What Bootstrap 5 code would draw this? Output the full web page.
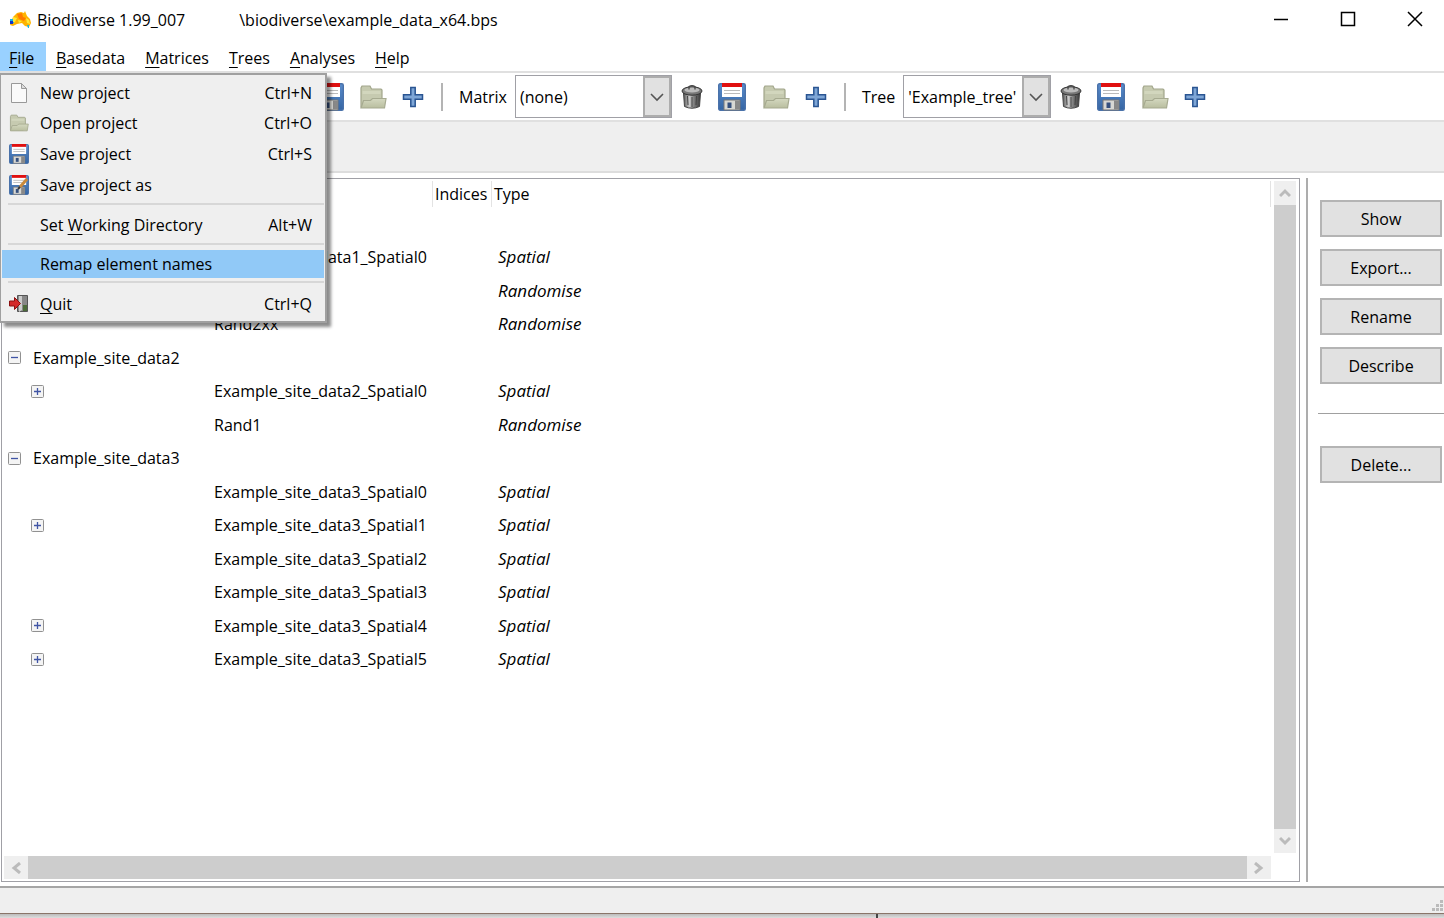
<!DOCTYPE html>
<html lang="en">
<head>
<meta charset="utf-8">
<meta name="viewport" content="width=device-width, initial-scale=1">
<title>Biodiverse 1.99_007</title>
<link href="https://cdn.jsdelivr.net/npm/bootstrap@5.3.0/dist/css/bootstrap.min.css" rel="stylesheet">
<style>
body{font-family:"Open Sans","Noto Sans",sans-serif;font-size:16px;line-height:24px;color:#000;background:#fff;white-space:nowrap;overflow:hidden}
svg{display:block;flex:none}
u{text-underline-offset:3px}
.app-title{height:42px;padding-left:9px;gap:9px}
.app-title .win-btn{width:58px;height:38px;border:0;background:none;padding:0}
.file-path{margin-left:54px}
.app-menu{height:29px}
.app-menu a{padding:4px 10px 1px;color:#000;text-decoration:none}
.app-menu a.open{background:#99d1ff;padding-left:9px;width:46px}
.app-tools{height:51px;border-top:2px solid #e0e0e0;border-bottom:2px solid #e0e0e0;padding-left:320px}
.tool-btn{border:0;background:none;padding:0;width:40px;height:44px;display:flex;align-items:center;justify-content:center}
.tool-btn.cut{width:33px;justify-content:flex-start}
.tool-rule{width:2px;height:28px;background:#b4b4b4;margin:0 16px 0 8px}
.combo{height:43px;appearance:none;border:1px solid #a0a0a6;border-radius:0;color:#000;padding:0 30px 0 4px;
 background:#fff url("data:image/svg+xml,%3Csvg xmlns='http://www.w3.org/2000/svg' width='28' height='41'%3E%3Cpath fill='%23e1e1e1' stroke='%23adadad' stroke-width='2' d='M1 1h26v39H1z'/%3E%3Cpath d='M8 18l6 6 6-6' fill='none' stroke='%23555' stroke-width='1.6'/%3E%3C/svg%3E") right center no-repeat}
.combo-matrix{width:157px}
.combo-tree{width:148px}
.tab-strip{height:51px;background:#efefef;border-bottom:2px solid #ddd}
.tree-frame{border:1px solid #a0a0a6;margin:5px 0 4px 1px;padding:2px 3px 2px 2px;display:grid;grid-template:1fr 23px / 1fr 22px;gap:3px;min-width:0}
.tree-table{table-layout:fixed;width:100%;border-collapse:separate;border-spacing:0}
.tree-table th{height:26px;padding:0 0 0 2px;font-weight:400;border-right:1px solid #e3e3e3;line-height:26px}
.tree-table td{height:33px;padding:0}
.tree-table tbody tr:nth-child(even) td{height:34px}
.tree-table td.kind{font-style:italic;font-size:17px;padding-left:6px}
.tree-table td:first-child{padding-left:4px}
.tree-table td.child{padding-left:27px}
.expander{width:13px;height:13px;padding:0;border:0;background:none;display:block}
.scroll-part{background:#efefef;display:flex;align-items:center;justify-content:center;border:0;padding:0}
.scroll-part.v{height:24px}
.scroll-part.h{width:24px}
.scroll-thumb{background:#cdcdcd;flex:1}
.side{flex:none;border-left:2px solid #adadad;margin:5px 0 4px 6px;padding:22px 2px 0 12px;width:138px}
.side-list{row-gap:12px}
.side-btn{height:37px;border:2px solid #b4b4b4;border-radius:0;background:#e1e1e1;color:#000;padding:0;width:100%}
.side-rule{height:1px;background:#a0a0a0;margin:17px -2px 20px -2px}
.app-status{height:27px;border-top:2px solid #a5a5a5;background:#efefef}
.desk-edge{height:5px;border-top:1px solid #8a7569;background:linear-gradient(#bbb,#ddd)}
.desk-tick{width:2px;height:4px;background:#444;margin-left:876px}
.file-menu{position:absolute;left:0;top:73px;width:327px;background:#efefef;border:2px solid #a0a0a0;border-left-width:1px;padding:3px 1px 2px 1px;box-shadow:4px 4px 3px rgba(0,0,0,.45);z-index:5}
.file-item{display:flex;width:100%;align-items:center;border:0;background:none;text-align:left;height:30px;padding:0 12px 0 7px;color:#000}
.file-item.tall{height:31px}
.file-item .ico{width:31px}
.file-item.hot{height:28px;background:#91c9f7}
.file-rule{height:2px;background:#d7d7d7;margin:3px 0 5px 6px}
</style>
</head>
<body>
<svg width="0" height="0" class="position-absolute" aria-hidden="true">
<defs>
<linearGradient id="gb" x2="0" y2="1"><stop stop-color="#5a8ccb"/><stop offset="1" stop-color="#3465a4"/></linearGradient>
<linearGradient id="gc"><stop stop-color="#555"/><stop offset=".35" stop-color="#ccc"/><stop offset=".6" stop-color="#808080"/><stop offset="1" stop-color="#3a3a3a"/></linearGradient>
<linearGradient id="gf" x2="0" y2="1"><stop stop-color="#d4d8c0"/><stop offset="1" stop-color="#b9be9f"/></linearGradient>
<symbol id="i-save" viewBox="0 0 28 28"><rect x=".7" y=".7" width="26.6" height="26.6" rx="1.5" fill="url(#gb)" stroke="#4a72aa" stroke-width="1.4"/><path fill="#fff" d="M4 1h20v13H4z"/><path fill="#e01010" d="M4 0h20v4H4z"/><path d="M6 7.500h16M6 10.500h16" stroke="#bbb" stroke-width="1.200"/><path fill="#d8d8d4" stroke="#777" d="M6 17h16v10H6z"/><path fill="#888" d="M17 17.500h5v9h-5z"/><path fill="#35507e" d="M9.500 19.500h4v5.500h-4z"/></symbol>
<symbol id="i-folder" viewBox="0 0 28 24"><path fill="#c6cab0" stroke="#a2a68b" stroke-width="1.200" d="M2 22V3l1-2h8l1.500 3H22l1 1v9l-3 8z"/><path fill="#d2d6bd" d="M3.500 6h18v3h-18z"/><path fill="url(#gf)" stroke="#a6aa90" stroke-width="1.200" d="M4.500 15.500h7l2-2H27L25.500 23H2z"/></symbol>
<symbol id="i-plus" viewBox="0 0 22 22"><path fill="#7ea6d6" stroke="#2a5592" stroke-width="1.500" d="M8.800 1.500h4.400v7.300h7.300v4.400h-7.300v7.300H8.800v-7.300H1.500V8.800h7.300z"/></symbol>
<symbol id="i-trash" viewBox="0 0 22 24"><path fill="url(#gc)" stroke="#444" d="M2.500 8h17L18.500 21.500Q11 25 3.500 21.500z"/><path d="M6.500 11l.500 9M11 12v10M15.500 11l-.500 9" stroke="#444"/><ellipse cx="11" cy="6" rx="10" ry="4.200" fill="#777" stroke="#333"/><ellipse cx="11" cy="5" rx="7.500" ry="2.600" fill="#bbb"/><path d="M8 4.500V1.500q3-1.500 6 0v3" fill="none" stroke="#444" stroke-width="1.300"/></symbol>
<symbol id="i-minus-box" viewBox="0 0 13 13"><rect x=".5" y=".5" width="12" height="12" rx="1" fill="#f4f4f4" stroke="#919191"/><path d="M3 6.500h7" stroke="#4055a5" stroke-width="1.300"/></symbol>
<symbol id="i-plus-box" viewBox="0 0 13 13"><rect x=".5" y=".5" width="12" height="12" rx="1" fill="#f4f4f4" stroke="#919191"/><path d="M3 6.500h7M6.500 3v7" stroke="#4055a5" stroke-width="1.300"/></symbol>
</defs>
</svg>

<div class="d-flex flex-column vh-100 position-relative">
<header class="app-title d-flex align-items-start">
 <div class="d-flex align-items-center flex-grow-1 pt-2">
  <svg width="24" height="20" viewBox="0 0 24 20"><path fill="#ffb400" d="M4 7l4-4 4-1 3 1 1-2 2 5 3 3 1 4-2 4-4-1-3-3-5 1-4 2-3-1z"/><path fill="#ff7a00" d="M8 4l5-1 1 4 3 1-2 3-5-2z"/><path fill="#ffe93b" d="M4 7l4 1-2 4-2 1zM17 8l3 2 1 4-3-1zM9 10l4 1-3 2z"/><path fill="#19b4e8" d="M1 9h3v2H1zM3 12h2v1H3zM18 15h2v3h-1z"/><path fill="#1633c8" d="M1 11h3v3H1z"/></svg>
  <span class="ms-1">Biodiverse 1.99_007</span><span class="file-path">\biodiverse\example_data_x64.bps</span>
 </div>
 <button class="win-btn" aria-label="Minimize"><svg class="mx-auto" width="16" height="16"><path d="M1 8.500h14" stroke="#000" stroke-width="1.500"/></svg></button>
 <button class="win-btn" aria-label="Maximize"><svg class="mx-auto" width="16" height="16"><path d="M1.500 1.500h13v13h-13z" fill="none" stroke="#000" stroke-width="1.500"/></svg></button>
 <button class="win-btn" aria-label="Close"><svg class="mx-auto" width="16" height="16"><path d="M1 1l14 14M15 1L1 15" stroke="#000" stroke-width="1.500"/></svg></button>
</header>

<nav class="app-menu d-flex">
 <a href="#" class="open"><u>F</u>ile</a><a href="#"><u>B</u>asedata</a><a href="#"><u>M</u>atrices</a><a href="#"><u>T</u>rees</a><a href="#"><u>A</u>nalyses</a><a href="#"><u>H</u>elp</a>
</nav>

<div class="app-tools d-flex align-items-center">
 <button class="tool-btn cut" aria-label="Save basedata"><svg width="24" height="28"><use href="#i-save" width="28" x="-4" height="28"/></svg></button>
 <button class="tool-btn" aria-label="Open basedata"><svg width="28" height="24"><use href="#i-folder"/></svg></button>
 <button class="tool-btn" aria-label="Add basedata"><svg width="22" height="22"><use href="#i-plus"/></svg></button>
 <div class="tool-rule"></div>
 <label for="matrix" class="me-2">Matrix</label>
 <select id="matrix" class="combo combo-matrix"><option>(none)</option></select>
 <button class="tool-btn" aria-label="Delete matrix"><svg width="22" height="24"><use href="#i-trash"/></svg></button>
 <button class="tool-btn" aria-label="Save matrix"><svg width="28" height="28"><use href="#i-save"/></svg></button>
 <button class="tool-btn ms-1" aria-label="Open matrix"><svg width="28" height="24"><use href="#i-folder"/></svg></button>
 <button class="tool-btn" aria-label="Add matrix"><svg width="22" height="22"><use href="#i-plus"/></svg></button>
 <div class="tool-rule"></div>
 <label for="tree" class="me-2">Tree</label>
 <select id="tree" class="combo combo-tree"><option>'Example_tree'</option></select>
 <button class="tool-btn" aria-label="Delete tree"><svg width="22" height="24"><use href="#i-trash"/></svg></button>
 <button class="tool-btn" aria-label="Save tree"><svg width="28" height="28"><use href="#i-save"/></svg></button>
 <button class="tool-btn ms-1" aria-label="Open tree"><svg width="28" height="24"><use href="#i-folder"/></svg></button>
 <button class="tool-btn" aria-label="Add tree"><svg width="22" height="22"><use href="#i-plus"/></svg></button>
</div>
<div class="tab-strip"></div>

<main class="d-flex flex-grow-1">
 <section class="tree-frame flex-grow-1">
  <div>
   <table class="tree-table">
    <colgroup><col style="width:210px"><col style="width:219px"><col style="width:59px"><col></colgroup>
    <thead><tr><th class="border-0"></th><th></th><th>Indices</th><th>Type</th></tr></thead>
    <tbody>
     <tr><td colspan="4"></td></tr>
     <tr><td></td><td>Example_site_data1_Spatial0</td><td></td><td class="kind">Spatial</td></tr>
     <tr><td></td><td></td><td></td><td class="kind">Randomise</td></tr>
     <tr><td></td><td>Rand2xx</td><td></td><td class="kind">Randomise</td></tr>
     <tr><td colspan="4"><div class="d-flex align-items-center"><button class="expander me-2" aria-label="Collapse"><svg width="13" height="13"><use href="#i-minus-box"/></svg></button><span class="ps-1">Example_site_data2</span></div></td></tr>
     <tr><td class="child"><button class="expander" aria-label="Expand"><svg width="13" height="13"><use href="#i-plus-box"/></svg></button></td><td>Example_site_data2_Spatial0</td><td></td><td class="kind">Spatial</td></tr>
     <tr><td></td><td>Rand1</td><td></td><td class="kind">Randomise</td></tr>
     <tr><td colspan="4"><div class="d-flex align-items-center"><button class="expander me-2" aria-label="Collapse"><svg width="13" height="13"><use href="#i-minus-box"/></svg></button><span class="ps-1">Example_site_data3</span></div></td></tr>
     <tr><td></td><td>Example_site_data3_Spatial0</td><td></td><td class="kind">Spatial</td></tr>
     <tr><td class="child"><button class="expander" aria-label="Expand"><svg width="13" height="13"><use href="#i-plus-box"/></svg></button></td><td>Example_site_data3_Spatial1</td><td></td><td class="kind">Spatial</td></tr>
     <tr><td></td><td>Example_site_data3_Spatial2</td><td></td><td class="kind">Spatial</td></tr>
     <tr><td></td><td>Example_site_data3_Spatial3</td><td></td><td class="kind">Spatial</td></tr>
     <tr><td class="child"><button class="expander" aria-label="Expand"><svg width="13" height="13"><use href="#i-plus-box"/></svg></button></td><td>Example_site_data3_Spatial4</td><td></td><td class="kind">Spatial</td></tr>
     <tr><td class="child"><button class="expander" aria-label="Expand"><svg width="13" height="13"><use href="#i-plus-box"/></svg></button></td><td>Example_site_data3_Spatial5</td><td></td><td class="kind">Spatial</td></tr>
    </tbody>
   </table>
  </div>
  <div class="d-flex flex-column">
   <button class="scroll-part v" aria-label="Scroll up"><svg width="12" height="10"><path d="M1 8l5-5 5 5" fill="none" stroke="#bbb" stroke-width="3"/></svg></button>
   <div class="scroll-thumb"></div>
   <button class="scroll-part v" aria-label="Scroll down"><svg width="12" height="10"><path d="M1 2l5 5 5-5" fill="none" stroke="#bbb" stroke-width="3"/></svg></button>
  </div>
  <div class="d-flex">
   <button class="scroll-part h" aria-label="Scroll left"><svg width="10" height="12"><path d="M9 1L3 6l6 5" fill="none" stroke="#bbb" stroke-width="3"/></svg></button>
   <div class="scroll-thumb"></div>
   <button class="scroll-part h" aria-label="Scroll right"><svg width="10" height="12"><path d="M1 1l6 5-6 5" fill="none" stroke="#bbb" stroke-width="3"/></svg></button>
  </div>
 </section>
 <aside class="side">
  <div class="d-grid side-list">
   <button class="side-btn">Show</button>
   <button class="side-btn">Export...</button>
   <button class="side-btn">Rename</button>
   <button class="side-btn">Describe</button>
   <div class="side-rule"></div>
   <button class="side-btn">Delete...</button>
  </div>
 </aside>
</main>

<footer>
 <div class="app-status d-flex justify-content-end align-items-end"><svg width="12" height="14"><path fill="#bbb" d="M8 1h3v3H8zM4 5h3v3H4zM8 5h3v3H8zM0 9h3v3H0zM4 9h3v3H4zM8 9h3v3H8z"/></svg></div>
 <div class="desk-edge"><div class="desk-tick"></div></div>
</footer>

<div class="file-menu">
 <button class="file-item"><span class="ico"><svg width="20" height="20"><path fill="#fafafa" stroke="#999" d="M2.500 .500h10l5 5v14h-15z"/><path fill="#ddd" stroke="#999" d="M12.500 .500v5h5z"/></svg></span><span class="flex-grow-1">New project</span>Ctrl+N</button>
 <button class="file-item"><span class="ico"><svg width="20" height="18"><use href="#i-folder"/></svg></span><span class="flex-grow-1">Open project</span>Ctrl+O</button>
 <button class="file-item tall"><span class="ico"><svg width="20" height="20"><use href="#i-save"/></svg></span><span class="flex-grow-1">Save project</span>Ctrl+S</button>
 <button class="file-item tall"><span class="ico"><svg width="20" height="20"><use href="#i-save"/><path d="M18 4l-7 8" stroke="#c98a3c" stroke-width="3"/><path d="M11 12l-2 2" stroke="#333" stroke-width="2"/></svg></span><span class="flex-grow-1">Save project as</span></button>
 <div class="file-rule"></div>
 <button class="file-item"><span class="ico"></span><span class="flex-grow-1">Set <u>W</u>orking Directory</span>Alt+W</button>
 <div class="file-rule"></div>
 <button class="file-item hot"><span class="ico"></span><span class="flex-grow-1">Remap element names</span></button>
 <div class="file-rule"></div>
 <button class="file-item tall"><span class="ico"><svg width="20" height="20"><path fill="#888" stroke="#555" d="M8.500 1.500h10v16h-10z"/><path fill="#ccc" d="M10 2h3v14l-3 2z"/><path fill="#4c6b3a" d="M14 11h4v6h-4z"/><path fill="#d42a2a" stroke="#8c1010" d="M.500 7h5V3.500l6 6-6 6V12h-5z"/></svg></span><span class="flex-grow-1"><u>Q</u>uit</span>Ctrl+Q</button>
</div>
</div>
<script src="https://cdn.jsdelivr.net/npm/bootstrap@5.3.0/dist/js/bootstrap.bundle.min.js"></script>
</body>
</html>
